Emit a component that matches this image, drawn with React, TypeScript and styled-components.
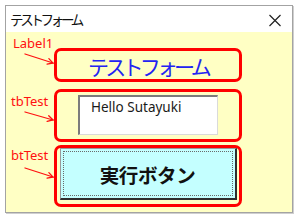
import React from "react";
import styled, { createGlobalStyle } from "styled-components";

const Global = createGlobalStyle`
  html, body { margin: 0; padding: 0; background: #ffffff; }
  body { font-family: "Noto Sans", "Noto Sans CJK JP", sans-serif; }
`;

const Page = styled.div`
  width: 300px;
  height: 220px;
  padding: 5px 0 0 5px;
  box-sizing: border-box;
`;

const Window = styled.div`
  width: 288px;
  height: 208px;
  box-sizing: border-box;
  border: 1px solid #a3a3a3;
  box-shadow: 1px 1px 0 #cfcfcf;
  display: flex;
  flex-direction: column;
  background: #ffffff;
`;

const TitleBar = styled.div`
  height: 26px;
  display: flex;
  align-items: center;
  justify-content: space-between;
  padding: 0 10px 0 4px;
  background: #ffffff;
`;

const TitleText = styled.span`
  font-family: "Noto Sans CJK JP", sans-serif;
  font-size: 13.5px;
  letter-spacing: -3.3px;
  color: #111;
  line-height: 1;
  margin-top: 1px;
`;

const CloseIcon = styled.svg`
  width: 14px;
  height: 13px;
  display: block;
  margin-top: 2px;
`;

const Body = styled.div`
  position: relative;
  flex: 1;
  background: #ffffc4;
  padding: 16px 0 4px 48px;
  display: flex;
  flex-direction: column;
`;

const Frame = styled.div<{ $h: number; $gap: number; $pad: string }>`
  box-sizing: border-box;
  width: 188px;
  height: ${(p) => p.$h}px;
  margin-top: ${(p) => p.$gap}px;
  border: 3.5px solid #ff0000;
  border-radius: 7px;
  padding: ${(p) => p.$pad};
  display: flex;
  align-items: center;
  justify-content: center;
`;

const BlueLabel = styled.span`
  font-family: "Noto Sans CJK JP", sans-serif;
  font-size: 21px;
  letter-spacing: -3.8px;
  color: #2323f2;
  line-height: 1;
  margin-top: 2px;
`;

const TextBox = styled.div`
  box-sizing: border-box;
  width: 140px;
  height: 40px;
  background: #ffffff;
  border-style: solid;
  border-width: 2px 1px 1px 2px;
  border-color: #7c7c7c #dadada #dadada #7c7c7c;
  padding: 1px 0 0 11px;
  font-family: "Noto Sans", sans-serif;
  font-size: 13.5px;
  color: #1a1a1a;
  line-height: 18px;
`;

const Button = styled.div`
  box-sizing: border-box;
  width: 177px;
  height: 52px;
  background: #c4ffff;
  border-style: solid;
  border-width: 1px 2px 2px 1px;
  border-color: #9a9a9a #2e2e2e #2e2e2e #9a9a9a;
  padding: 2px;
  display: flex;
`;

const FocusRect = styled.div`
  flex: 1;
  border: 1px dotted #6a6a6a;
  display: flex;
  align-items: center;
  justify-content: center;
  font-family: "Noto Sans CJK JP", sans-serif;
  font-weight: 700;
  font-size: 19.5px;
  letter-spacing: -0.4px;
  color: #111;
  padding-top: 1px;
`;

const Callout = styled.span<{ $left: number; $top: number }>`
  position: absolute;
  left: ${(p) => p.$left}px;
  top: ${(p) => p.$top}px;
  font-family: "Noto Sans", sans-serif;
  font-size: 13px;
  line-height: 15px;
  color: #ff1010;
`;

const ArrowLayer = styled.svg`
  position: absolute;
  left: 0;
  top: 0;
  width: 60px;
  height: 180px;
  pointer-events: none;
`;

const arrows = [
  [19, 22, 47, 31],
  [19, 80, 47, 88],
  [19, 136, 47, 145],
];

function Arrow({ x1, y1, x2, y2 }: { x1: number; y1: number; x2: number; y2: number }) {
  const ang = Math.atan2(y2 - y1, x2 - x1);
  const len = 6;
  const spread = 0.5;
  const ax = x2 - len * Math.cos(ang - spread);
  const ay = y2 - len * Math.sin(ang - spread);
  const bx = x2 - len * Math.cos(ang + spread);
  const by = y2 - len * Math.sin(ang + spread);
  return (
    <g stroke="#ff1010" strokeWidth={1.3} fill="none" strokeLinecap="round">
      <line x1={x1} y1={y1} x2={x2} y2={y2} />
      <polyline points={`${ax},${ay} ${x2},${y2} ${bx},${by}`} />
    </g>
  );
}

export default function App() {
  return (
    <Page>
      <Global />
      <Window>
        <TitleBar>
          <TitleText>テストフォーム</TitleText>
          <CloseIcon viewBox="0 0 14 13">
            <path d="M1.5 1 L12.5 12 M12.5 1 L1.5 12" stroke="#222" strokeWidth={1.2} fill="none" />
          </CloseIcon>
        </TitleBar>
        <Body>
          <Frame $h={34} $gap={0} $pad="0">
            <BlueLabel>テストフォーム</BlueLabel>
          </Frame>
          <Frame $h={53} $gap={7} $pad="0 0 1px 0">
            <TextBox>Hello Sutayuki</TextBox>
          </Frame>
          <Frame $h={62} $gap={3} $pad="0 0 4px 0">
            <Button>
              <FocusRect>実行ボタン</FocusRect>
            </Button>
          </Frame>
          <Callout $left={7} $top={4}>Label1</Callout>
          <Callout $left={5} $top={62}>tbTest</Callout>
          <Callout $left={5} $top={116}>btTest</Callout>
          <ArrowLayer viewBox="0 0 60 180">
            {arrows.map(([x1, y1, x2, y2], i) => (
              <Arrow key={i} x1={x1} y1={y1} x2={x2} y2={y2} />
            ))}
          </ArrowLayer>
        </Body>
      </Window>
    </Page>
  );
}
